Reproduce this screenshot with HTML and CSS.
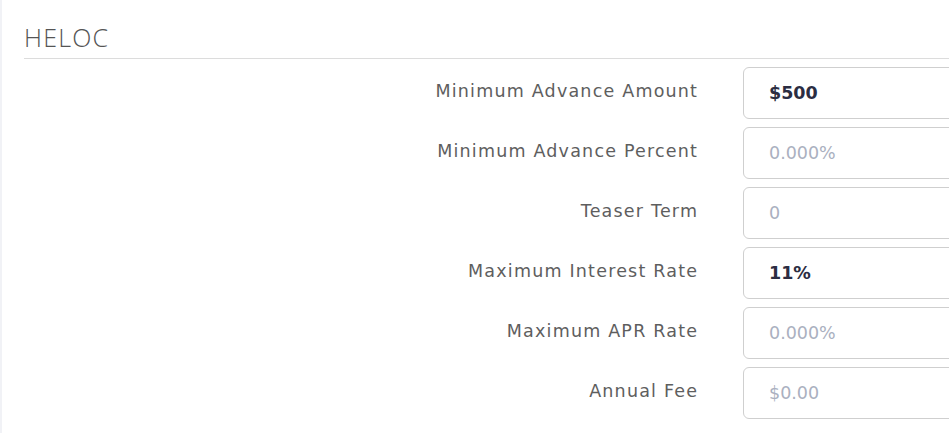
FILE: index.html
```html
<!DOCTYPE html>
<html lang="en">
<head>
<meta charset="utf-8">
<title>HELOC</title>
<link rel="stylesheet" href="styles.css">
</head>
<body>
<div class="page">
  <section class="panel">
    <h2 class="panel-title">HELOC</h2>
    <div class="form">
      <label class="field-label" for="f1">Minimum Advance Amount</label>
      <input class="field-input" id="f1" type="text" value="$500">
      <label class="field-label" for="f2">Minimum Advance Percent</label>
      <input class="field-input" id="f2" type="text" placeholder="0.000%">
      <label class="field-label" for="f3">Teaser Term</label>
      <input class="field-input" id="f3" type="text" placeholder="0">
      <label class="field-label" for="f4">Maximum Interest Rate</label>
      <input class="field-input" id="f4" type="text" value="11%">
      <label class="field-label" for="f5">Maximum APR Rate</label>
      <input class="field-input" id="f5" type="text" placeholder="0.000%">
      <label class="field-label" for="f6">Annual Fee</label>
      <input class="field-input" id="f6" type="text" placeholder="$0.00">
    </div>
  </section>
</div>
</body>
</html>
```
FILE: styles.css
```css
html, body {
  margin: 0;
  padding: 0;
  overflow: hidden;
  background: #ffffff;
}
body {
  font-family: "DejaVu Sans", "Open Sans", sans-serif;
  width: 949px;
  height: 433px;
}
.page {
  border-left: 2px solid #f1f2f6;
  height: 100%;
  box-sizing: border-box;
  overflow: hidden;
}
.panel {
  padding: 22px 0 0 22px;
}
.panel-title {
  margin: 0;
  font-family: "Open Sans", sans-serif;
  font-size: 25px;
  line-height: 30px;
  font-weight: 300;
  color: #555555;
  padding-bottom: 6px;
  border-bottom: 1px solid #dcdcdc;
  letter-spacing: 1.2px;
}
.form {
  display: grid;
  grid-template-columns: 673px 300px;
  column-gap: 46px;
  row-gap: 8px;
  padding-top: 8px;
  align-items: center;
}
.field-label {
  text-align: right;
  font-size: 17.5px;
  color: #5e5e5e;
  padding-bottom: 4px;
  letter-spacing: 1.2px;
  margin-right: -1.2px;
}
.field-input {
  box-sizing: border-box;
  height: 52px;
  border: 1px solid #cfcfcf;
  border-radius: 6px;
  padding: 0 0 0 25px;
  font-family: inherit;
  font-size: 17.5px;
  font-weight: 600;
  color: #2b2d42;
  background: #ffffff;
  outline: none;
}
.field-input::placeholder {
  color: #aab0c0;
  font-weight: 400;
}
```
